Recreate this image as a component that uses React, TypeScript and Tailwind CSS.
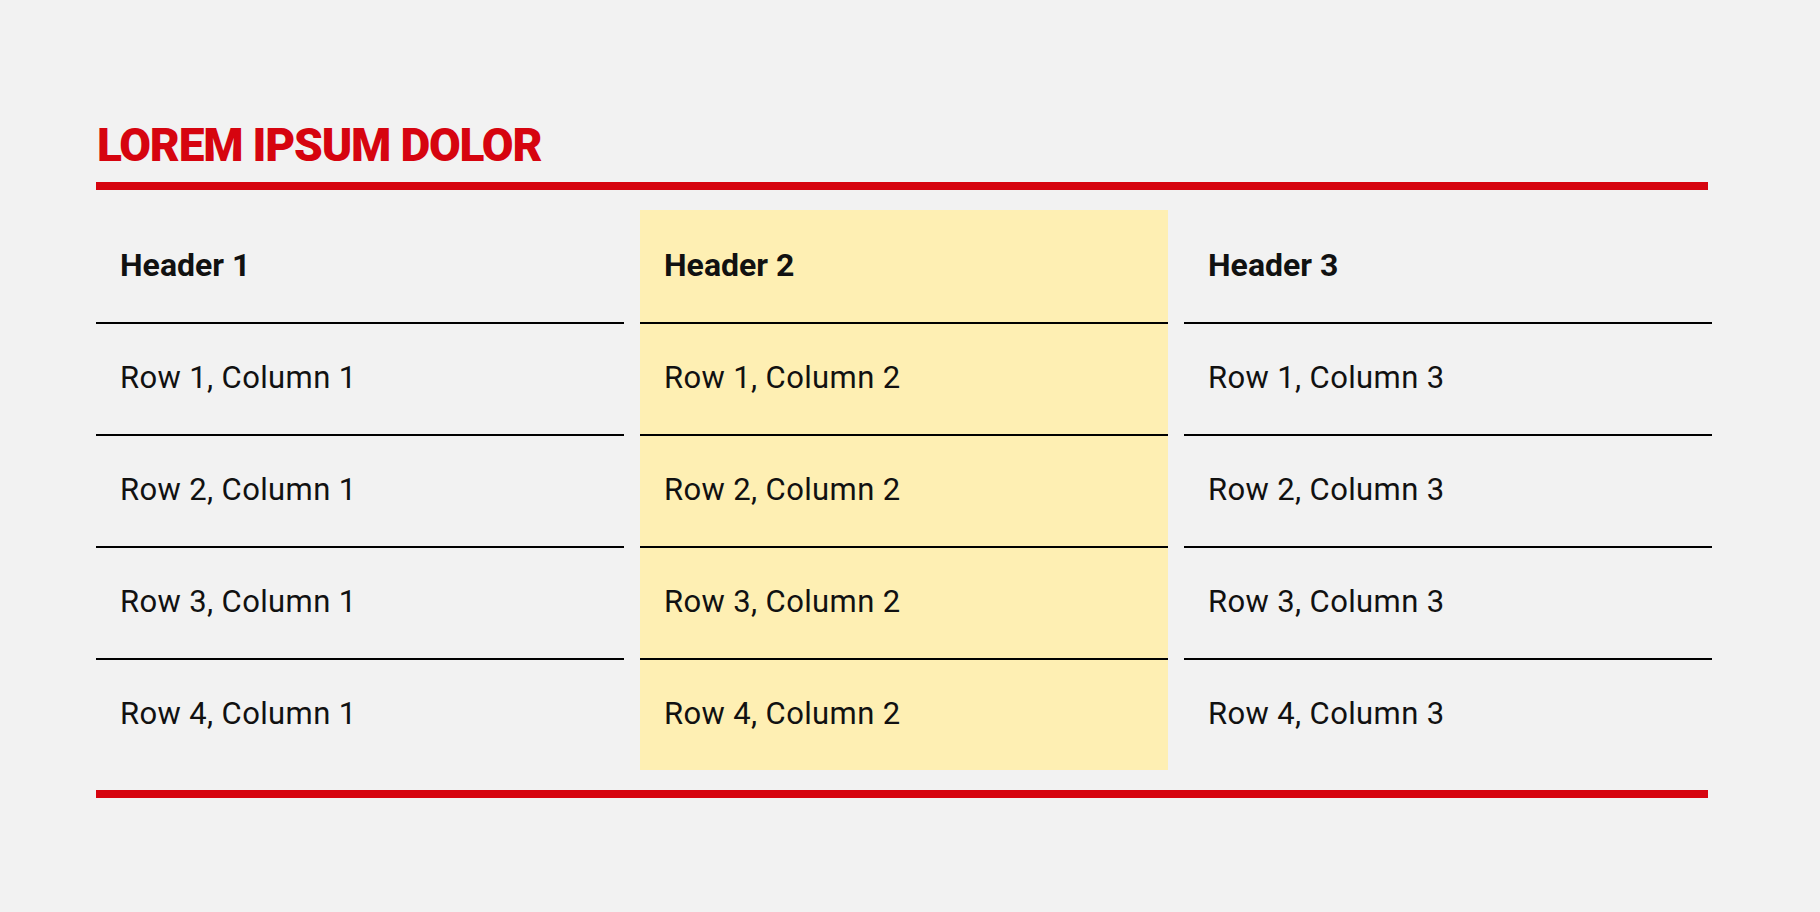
import React from 'react';

const columns = [
  { header: 'Header 1', highlight: false },
  { header: 'Header 2', highlight: true },
  { header: 'Header 3', highlight: false },
];

const rows = [1, 2, 3, 4];

const App = () => {
  return (
    <div className="min-h-screen bg-[#f2f2f2] pl-[96px] pt-[122px]" style={{ fontFamily: 'Roboto, "Noto Sans", sans-serif' }}>
      <div className="w-[1616px]">
        <h1 className="text-[46px] leading-[46px] font-black tracking-[-0.026em] text-[#d6040f] uppercase pl-[1px]">
          Lorem Ipsum Dolor
        </h1>
        <div className="mt-[14px] h-2 w-[1612px] bg-[#d6040f]" />

        <div className="mt-5 grid grid-cols-3 gap-x-4">
          {columns.map((col, ci) => (
            <div key={ci} className={col.highlight ? 'flex flex-col bg-[#feefb3]' : 'flex flex-col'}>
              <div className="flex h-[114px] items-center border-b-2 border-black px-6 pb-[2px] text-[32px] font-bold text-[#111]">
                {col.header}
              </div>
              {rows.map((r) => (
                <div
                  key={r}
                  className={
                    r === 4
                      ? 'flex h-[110px] items-center px-6 pb-[2px] text-[31px] tracking-[0.012em] text-[#111]'
                      : 'flex h-[112px] items-center border-b-2 border-black px-6 pb-[2px] text-[31px] tracking-[0.012em] text-[#111]'
                  }
                >
                  Row {r}, Column {ci + 1}
                </div>
              ))}
            </div>
          ))}
        </div>

        <div className="mt-5 h-2 w-[1612px] bg-[#d6040f]" />
      </div>
    </div>
  );
};

export default App;
